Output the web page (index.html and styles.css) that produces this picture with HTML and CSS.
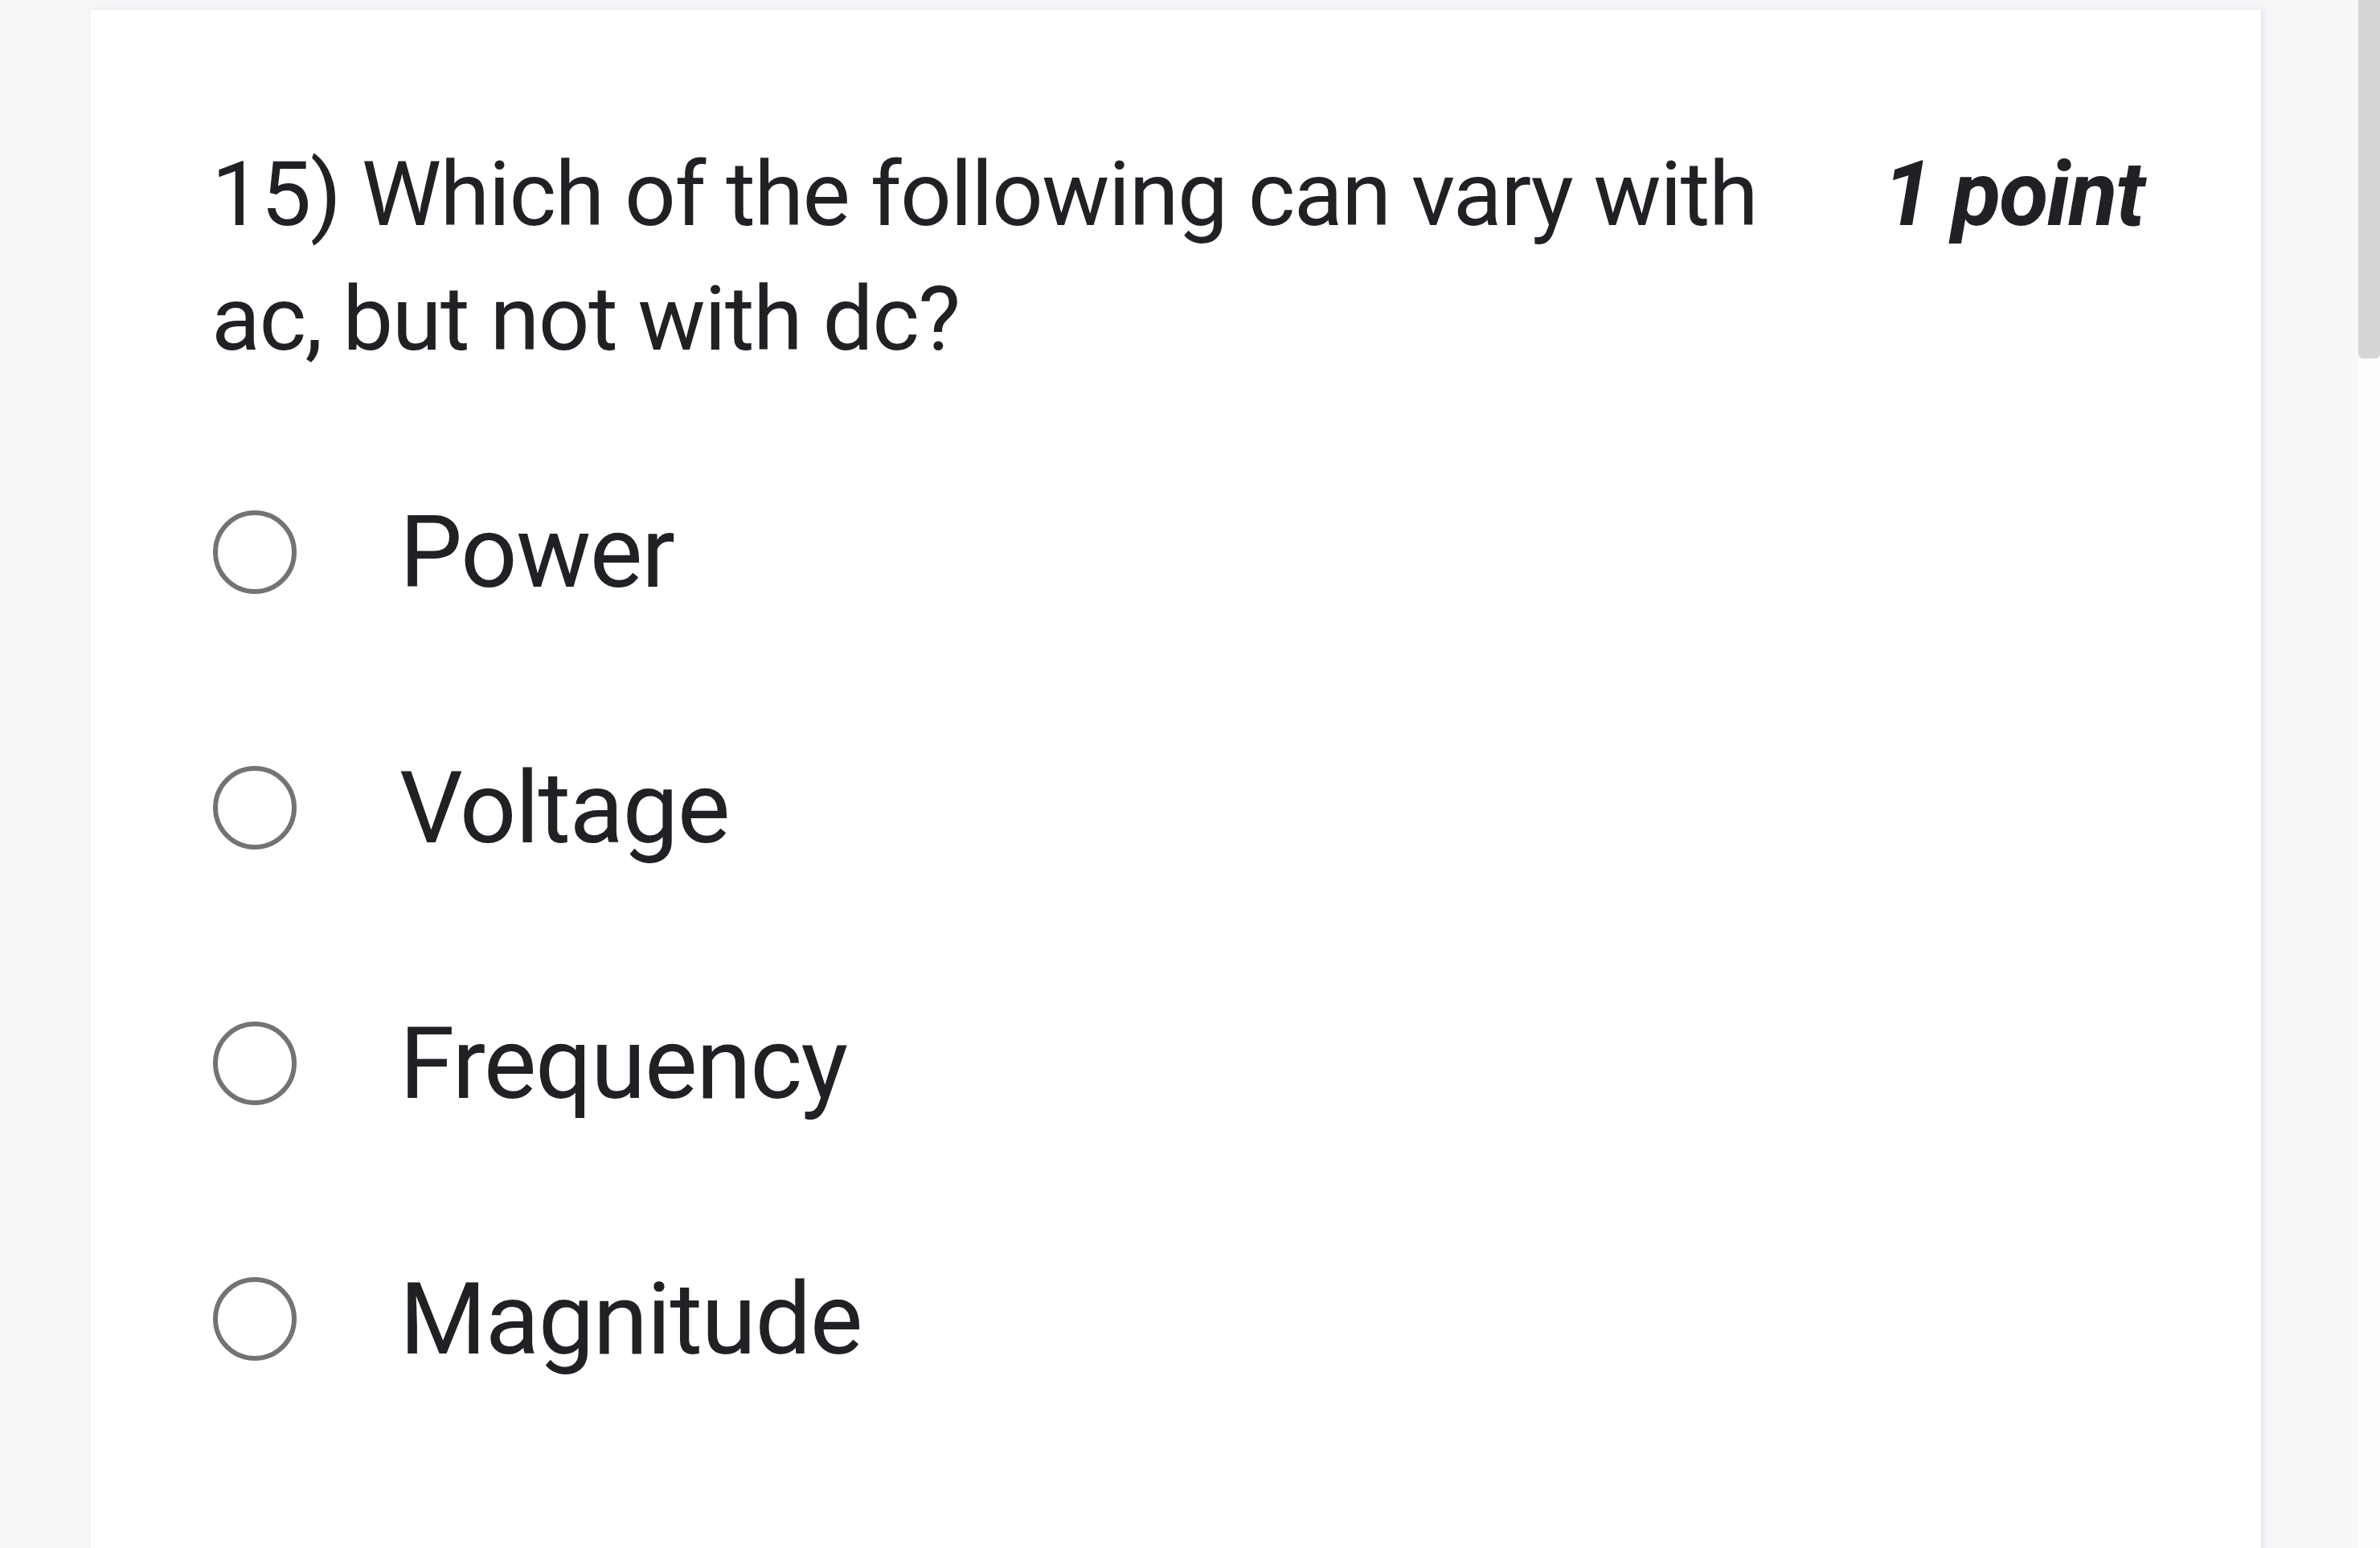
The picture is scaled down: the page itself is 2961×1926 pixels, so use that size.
FILE: index.html
```html
<!DOCTYPE html>
<html lang="en">
<head>
<meta charset="utf-8">
<title>Question 15</title>
<link rel="stylesheet" href="styles.css">
</head>
<body>
<div class="page">
  <main class="main">
    <section class="card">
      <div class="question-head">
        <div class="question-title">15) Which of the following can vary with ac, but not with dc?</div>
        <div class="points">1 point</div>
      </div>
      <div class="options">
        <label class="option"><span class="radio"></span><span class="option-text">Power</span></label>
        <label class="option"><span class="radio"></span><span class="option-text">Voltage</span></label>
        <label class="option"><span class="radio"></span><span class="option-text">Frequency</span></label>
        <label class="option"><span class="radio"></span><span class="option-text">Magnitude</span></label>
      </div>
    </section>
  </main>
  <div class="scrollbar"><div class="thumb"></div></div>
</div>
</body>
</html>
```
FILE: styles.css
```css
html, body {
  margin: 0;
  padding: 0;
  height: 100%;
  overflow: hidden;
}
body {
  background: #f7f7f9;
  font-family: Roboto, "Liberation Sans", Arial, sans-serif;
  color: #202124;
}
.page {
  display: flex;
  height: 1926px;
}
.main {
  flex: 1;
  padding: 12px 0 0 113px;
}
.card {
  width: 2700px;
  height: 1950px;
  background: #ffffff;
  box-shadow: 2px 0 6px rgba(200, 202, 220, 0.55);
  padding: 152px 146px 0 150px;
  box-sizing: border-box;
}
.question-head {
  display: flex;
  align-items: flex-start;
}
.question-title {
  flex: 1;
  font-size: 112px;
  line-height: 155px;
  letter-spacing: -1.5px;
  padding-right: 110px;
}
.points {
  font-size: 112px;
  line-height: 155px;
  font-weight: 700;
  font-style: italic;
  letter-spacing: -2px;
  white-space: nowrap;
}
.options {
  margin-top: 54px;
  display: flex;
  flex-direction: column;
}
.option {
  display: flex;
  align-items: center;
  height: 318px;
}
.radio {
  width: 104px;
  height: 104px;
  box-sizing: border-box;
  border: 6px solid #737373;
  border-radius: 50%;
  margin-left: 2px;
  flex: none;
}
.option-text {
  font-size: 124px;
  margin-left: 128px;
  letter-spacing: -1.5px;
  color: #202124;
}
.scrollbar {
  width: 27px;
  background: #fdfdfd;
  flex: none;
}
.thumb {
  height: 446px;
  background: #d6d6d6;
  border-radius: 0 0 6px 6px;
}
```
